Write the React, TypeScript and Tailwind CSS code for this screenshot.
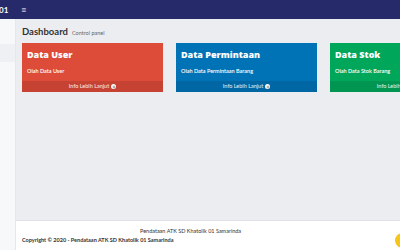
import { Plus } from 'lucide-react'

interface BoxProps {
  title: string
  subtitle: string
  color: string
}

function InfoBox({ title, subtitle, color }: BoxProps) {
  return (
    <div className={`w-[141px] h-[49px] shrink-0 flex flex-col text-white ${color}`}>
      <div className="flex-1 px-[5px] pt-[6px]">
        <h3 className="text-[9px] font-extrabold leading-[12px] font-['Open_Sans',sans-serif]">{title}</h3>
        <p className="text-[5.5px] mt-[7px] leading-[7px] font-semibold">{subtitle}</p>
      </div>
      <div className="h-[11px] bg-black/10 flex items-center justify-center gap-[2px] text-[5.5px] text-white/90">
        Info Lebih Lanjut
        <span className="w-[5px] h-[5px] rounded-full bg-white flex items-center justify-center">
          <Plus className="w-[4px] h-[4px] text-black/40" strokeWidth={5} />
        </span>
      </div>
    </div>
  )
}

export default function App() {
  return (
    <div
      className="relative w-[400px] h-[250px] overflow-hidden bg-white flex flex-col"
      style={{ fontFamily: 'Lato, "Open Sans", sans-serif' }}
    >
      {/* Navbar */}
      <header className="h-[19px] bg-[#262a6b] flex items-center text-white shrink-0">
        <span className="w-[16px] text-[8px] font-bold leading-none -ml-[1px]">01</span>
        <span className="ml-[6px] text-[9px] leading-none">≡</span>
      </header>

      <div className="flex flex-1 min-h-0">
        {/* Sidebar */}
        <aside className="w-[16px] shrink-0 bg-[#f7f8fa] border-r border-[#e4e7ec] flex flex-col">
          <div className="h-[25px]" />
          <div className="h-[18px] bg-[#eef0f3]" />
        </aside>

        {/* Main */}
        <div className="flex-1 flex flex-col min-w-0">
          <main className="flex-1 bg-[#ecedf1] px-[6px] pt-[7px]">
            <div className="flex items-baseline gap-[4px] text-[#333]">
              <h1 className="text-[9.5px] font-bold leading-[12px]">Dashboard</h1>
              <span className="text-[5.5px] text-[#666]">Control panel</span>
            </div>
            <div className="flex gap-[13px] mt-[5px]">
              <InfoBox title="Data User" subtitle="Olah Data User" color="bg-[#dd4b39]" />
              <InfoBox title="Data Permintaan" subtitle="Olah Data Permintaan Barang" color="bg-[#0073b7]" />
              <InfoBox title="Data Stok" subtitle="Olah Data Stok Barang" color="bg-[#00a65a]" />
            </div>
          </main>
          <footer className="h-[30px] shrink-0 bg-white border-t border-[#dfe1e6] px-[6px] pt-[7px] text-[#333]">
            <p className="text-[5.5px] leading-[7px] ml-[118px]">Pendataan ATK SD Khatolik 01 Samarinda</p>
            <p className="text-[5.5px] leading-[7px] font-bold mt-[2px]">
              Copyright © 2020 - Pendataan ATK SD Khatolik 01 Samarinda
            </p>
          </footer>
        </div>
      </div>

      <div className="absolute left-[395px] top-[233px] w-[15px] h-[15px] rounded-full bg-[#f5c518]" />
    </div>
  )
}
